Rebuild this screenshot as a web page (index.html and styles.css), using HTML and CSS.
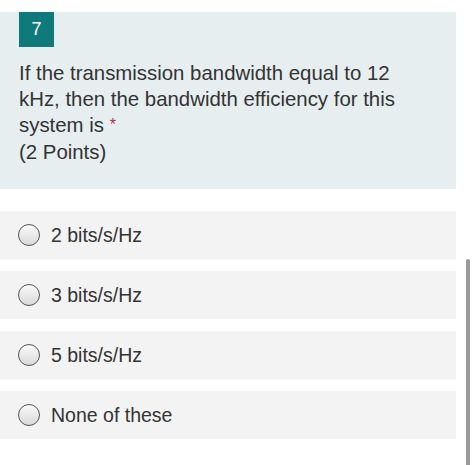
FILE: index.html
```html
<!DOCTYPE html>
<html>
<head>
<meta charset="utf-8">
<link rel="stylesheet" href="styles.css">
</head>
<body>
<div class="page">
  <section class="question">
    <div class="badge">7</div>
    <div class="qtext">If the transmission bandwidth equal to 12 kHz, then the bandwidth efficiency for this system is <span class="req">*</span></div>
    <div class="points">(2 Points)</div>
  </section>
  <div class="options">
    <div class="option"><span class="radio"></span><span class="label">2 bits/s/Hz</span></div>
    <div class="option"><span class="radio"></span><span class="label">3 bits/s/Hz</span></div>
    <div class="option"><span class="radio"></span><span class="label">5 bits/s/Hz</span></div>
    <div class="option"><span class="radio"></span><span class="label">None of these</span></div>
  </div>
</div>
<div class="scrollbar"></div>
</body>
</html>
```
FILE: styles.css
```css
html, body { margin: 0; padding: 0; background: #ffffff; }
body {
  font-family: "Liberation Sans", Arial, sans-serif;
  color: #333333;
  width: 474px;
  height: 465px;
  overflow: hidden;
  position: relative;
}
.page {
  width: 456px;
  padding-top: 12px;
}
.question {
  background: #e7eef0;
  height: 177px;
  box-sizing: border-box;
  padding: 0 19px;
}
.badge {
  width: 35px;
  height: 35px;
  background: #0f7a7c;
  color: #ffffff;
  font-size: 18px;
  display: flex;
  align-items: center;
  justify-content: center;
}
.qtext {
  margin-top: 13px;
  font-size: 20.4px;
  line-height: 26px;
  padding-right: 30px;
}
.req {
  display: inline-block;
  color: #b0303a;
  font-size: 16px;
  line-height: 12px;
  vertical-align: 2px;
}
.points {
  font-size: 20.4px;
  line-height: 28px;
}
.options {
  margin-top: 22px;
  display: flex;
  flex-direction: column;
  gap: 12px;
}
.option {
  height: 48px;
  background: #f3f3f3;
  display: flex;
  align-items: center;
  padding-left: 18px;
}
.radio {
  width: 20px;
  height: 20px;
  border: 1.5px solid #555555;
  border-radius: 50%;
  background: linear-gradient(#fafafa, #d9d9d9);
  flex: none;
}
.label {
  margin-left: 11px;
  font-size: 19.5px;
}
.scrollbar {
  position: absolute;
  left: 466px;
  top: 259px;
  width: 4px;
  height: 210px;
  background: #9a9a9a;
  border-radius: 2px;
}
```
